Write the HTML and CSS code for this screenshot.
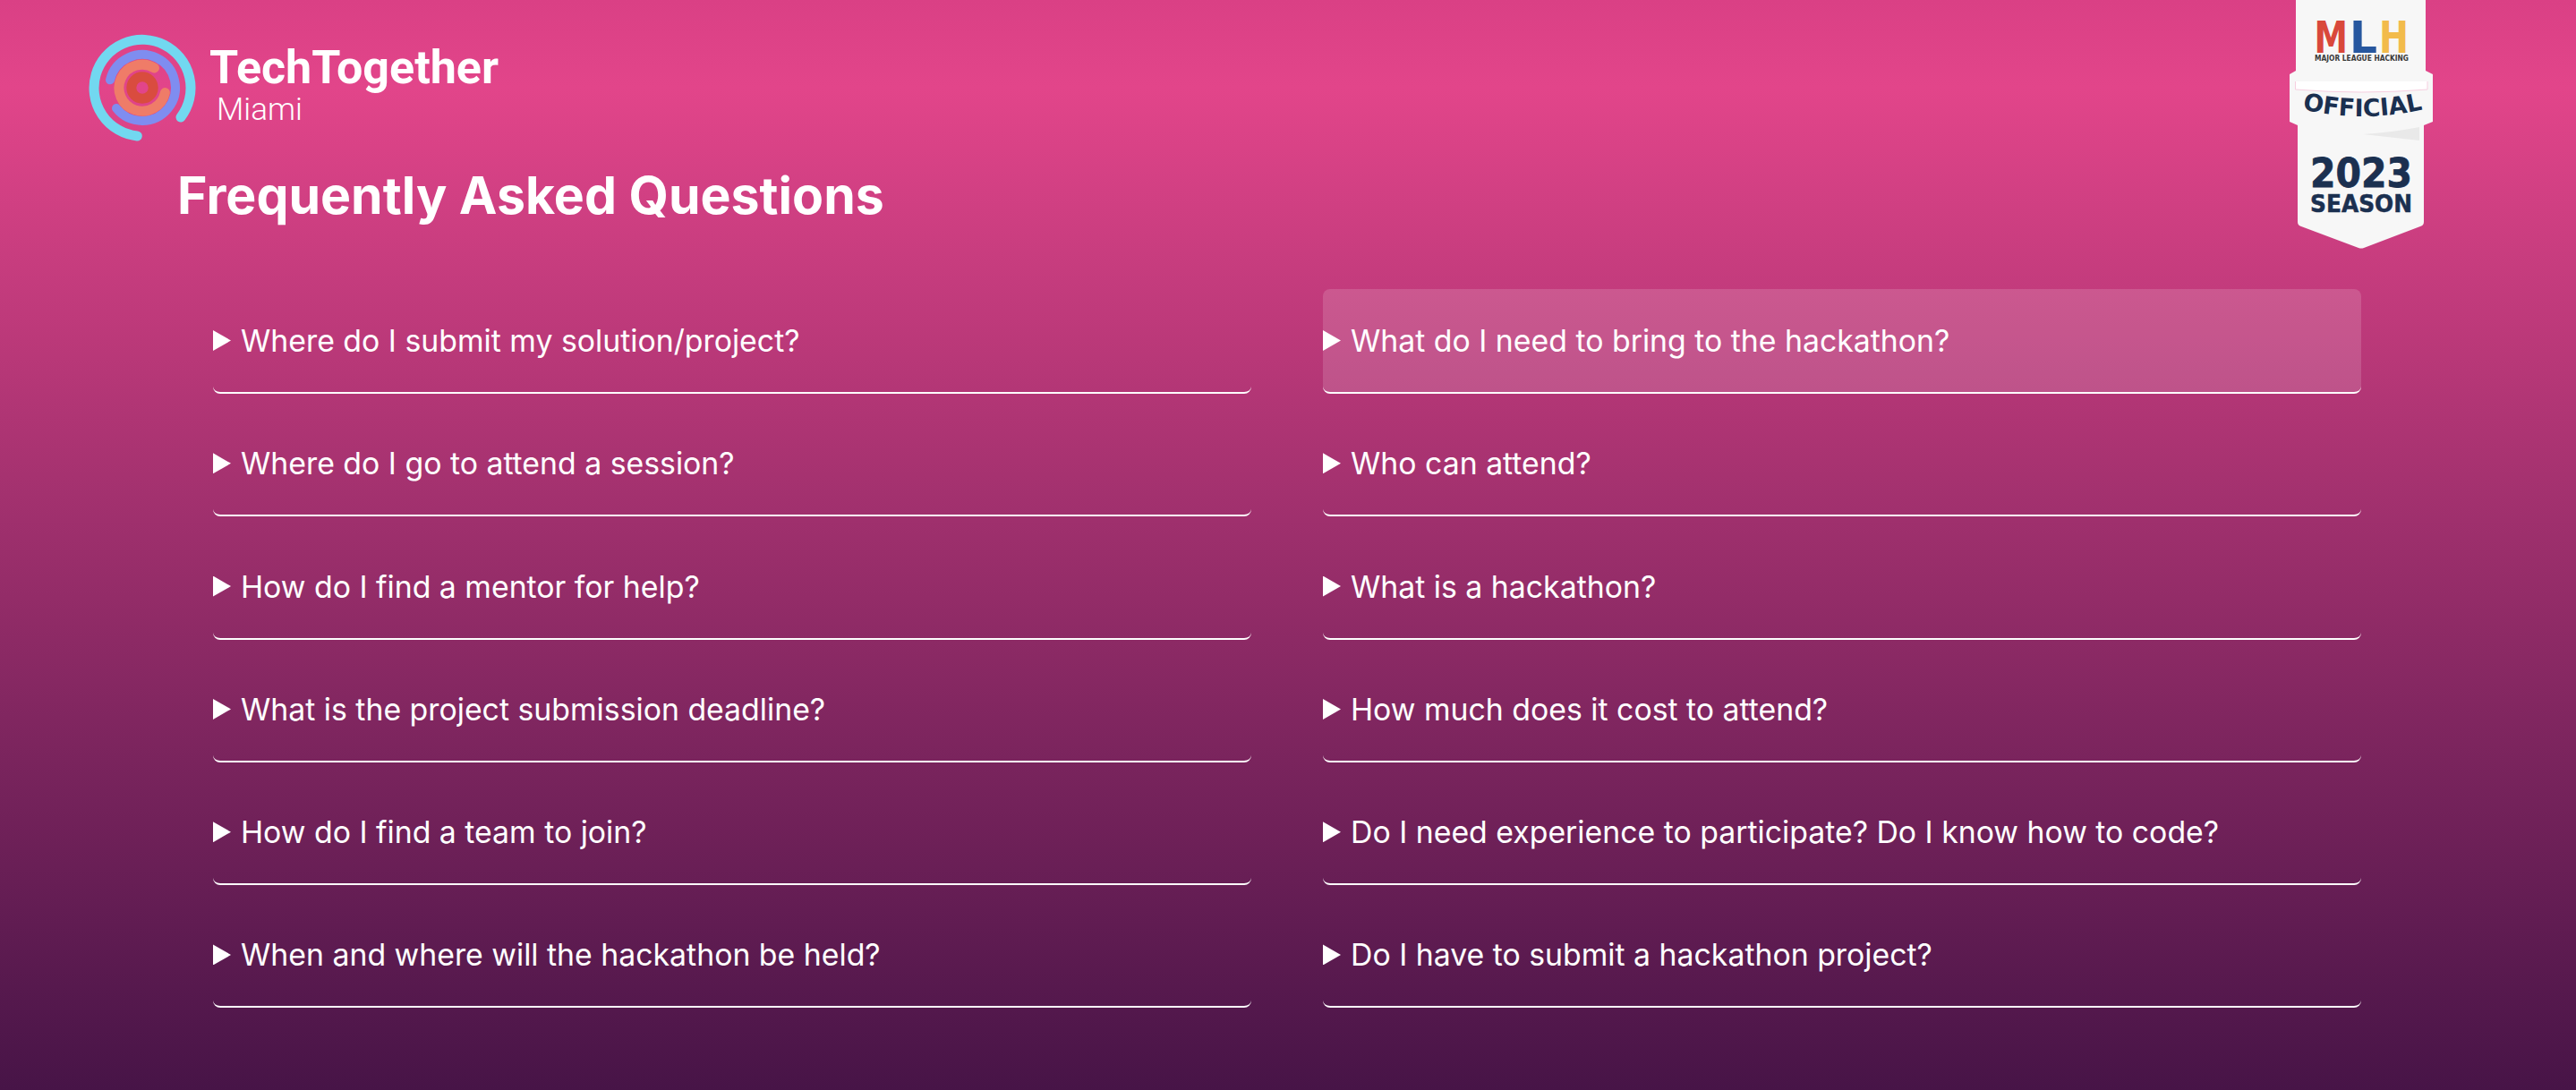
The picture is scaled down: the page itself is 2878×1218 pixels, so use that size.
FILE: index.html
```html
<!DOCTYPE html>
<html lang="en">
<head>
<meta charset="utf-8">
<title>TechTogether Miami FAQ</title>
<link rel="stylesheet" href="styles.css">
</head>
<body>
<main class="page">
  <header class="brand">
    <svg class="brand-mark" viewBox="-60 -60 120 120" aria-hidden="true">
      <path class="arc arc-cyan" d="M-5.7 54A54 54 0 1 1 43 33"/>
      <path class="arc arc-purple" d="M-36 -8.7A37 37 0 1 1 -29 23"/>
      <path class="arc arc-salmon" d="M25.4 5.6A26 26 0 1 1 13.5 -22"/>
      <circle class="arc arc-red" r="12.2"/>
    </svg>
    <div class="brand-text">
      <div class="brand-name">TechTogether</div>
      <div class="brand-city">Miami</div>
    </div>
  </header>

  <h1 class="title">Frequently Asked Questions</h1>

  <section class="faq">
    <details class="item"><summary>Where do I submit my solution/project?</summary></details>
    <details class="item item-hover"><summary>What do I need to bring to the hackathon?</summary></details>
    <details class="item"><summary>Where do I go to attend a session?</summary></details>
    <details class="item"><summary>Who can attend?</summary></details>
    <details class="item"><summary>How do I find a mentor for help?</summary></details>
    <details class="item"><summary>What is a hackathon?</summary></details>
    <details class="item"><summary>What is the project submission deadline?</summary></details>
    <details class="item"><summary>How much does it cost to attend?</summary></details>
    <details class="item"><summary>How do I find a team to join?</summary></details>
    <details class="item"><summary>Do I need experience to participate? Do I know how to code?</summary></details>
    <details class="item"><summary>When and where will the hackathon be held?</summary></details>
    <details class="item"><summary>Do I have to submit a hackathon project?</summary></details>
  </section>
</main>

<svg class="badge" viewBox="0 0 200 290" aria-label="MLH Official 2023 Season">
  <path class="badge-white" d="M45 0H190V79L198 83V136L188 140V248Q188 252 184 253L121 277Q118 278 115 277L51 253Q47 252 47 248V140L38 136V83L45 79Z"/>
  <path class="badge-fold" d="M120 150Q152 148 183 142V157Z"/>
  <path class="badge-edge" d="M44.500 91V100Q118 106 192 100V91"/>
  <text class="mlh mlh-m" x="65.500" y="59" textLength="37.500" lengthAdjust="spacingAndGlyphs">M</text>
  <text class="mlh mlh-l" x="105" y="59" textLength="31" lengthAdjust="spacingAndGlyphs">L</text>
  <text class="mlh mlh-h" x="138" y="59" textLength="33" lengthAdjust="spacingAndGlyphs">H</text>
  <text class="mlh-sub" x="66" y="68" textLength="105" lengthAdjust="spacingAndGlyphs">MAJOR LEAGUE HACKING</text>
  <path id="official-curve" class="curve" d="M52 122Q119 138 188 122"/>
  <text class="official"><textPath href="#official-curve" textLength="136" lengthAdjust="spacingAndGlyphs">OFFICIAL</textPath></text>
  <text class="year" x="61" y="209" textLength="114" lengthAdjust="spacingAndGlyphs">2023</text>
  <text class="season" x="61" y="237" textLength="114" lengthAdjust="spacingAndGlyphs">SEASON</text>
</svg>
</body>
</html>
```

FILE: styles.css
```css
* { box-sizing: border-box; }

html, body {
  margin: 0;
  height: 100%;
}

body {
  overflow: hidden;
  color: #fff;
  font-family: Inter, "Liberation Sans", sans-serif;
  background: linear-gradient(180deg, #da4085 0%, #e2458a 8%, #471447 100%);
}

.page {
  padding: 38px 0 0 100px;
}

.brand {
  display: flex;
  align-items: flex-start;
  height: 120px;
}

.brand-mark {
  width: 120px;
  height: 120px;
  flex: none;
  margin-left: -1px;
}

.arc {
  fill: none;
  stroke-linecap: round;
}

.arc-cyan { stroke: #72d8f0; stroke-width: 11; }
.arc-purple { stroke: #7f8df0; stroke-width: 10; }
.arc-salmon { stroke: #ef7c68; stroke-width: 11; }
.arc-red { stroke: #d94c3f; stroke-width: 11; }

.brand-text {
  margin-left: 15px;
  padding-top: 9px;
  font-family: Roboto, sans-serif;
}

.brand-name {
  font-weight: 700;
  font-size: 52px;
  line-height: 58px;
}

.brand-city {
  font-weight: 300;
  font-size: 35px;
  line-height: 36px;
  margin-left: 8px;
}

.title {
  margin: 27px 0 0 98px;
  font-size: 57.200px;
  line-height: 68px;
  font-weight: 700;
}

.faq {
  display: grid;
  grid-template-columns: 1160px 1160px;
  grid-auto-rows: 117px;
  column-gap: 80px;
  row-gap: 20.300px;
  margin: 70px 0 0 138px;
}

.item {
  border-bottom: 2px solid #fff;
  border-radius: 8px;
}

.item-hover {
  background: rgba(255, 255, 255, 0.15);
}

.item summary {
  display: flex;
  align-items: center;
  gap: 11px;
  height: 115px;
  font-size: 33.800px;
  cursor: pointer;
  list-style: none;
}

.item summary::before {
  content: "";
  flex: none;
  width: 20px;
  height: 23px;
  background: #fff;
  clip-path: polygon(0 0, 100% 50%, 0 100%);
}

.badge {
  position: absolute;
  left: 2520px;
  top: 0;
  width: 200px;
  height: 290px;
}

.badge-white { fill: #f7f7f7; }
.badge-fold { fill: #e9e9e9; }
.badge-edge { fill: #fff; stroke: #f6cfe0; stroke-width: 1; }
.curve { fill: none; }

.mlh,
.mlh-sub,
.official,
.year,
.season {
  font-family: "DejaVu Sans", sans-serif;
  font-weight: 700;
  fill: #1b3050;
}

.mlh { font-size: 49px; }
.mlh-m { fill: #d9483b; }
.mlh-l { fill: #27579f; }
.mlh-h { fill: #f2bb4b; }
.mlh-sub { font-size: 8px; fill: #3a3a3a; }
.official { font-size: 27px; }
.year { font-size: 45px; stroke: #1b3050; stroke-width: 0.8; }
.season { font-size: 26px; stroke: #1b3050; stroke-width: 0.5; }
```
